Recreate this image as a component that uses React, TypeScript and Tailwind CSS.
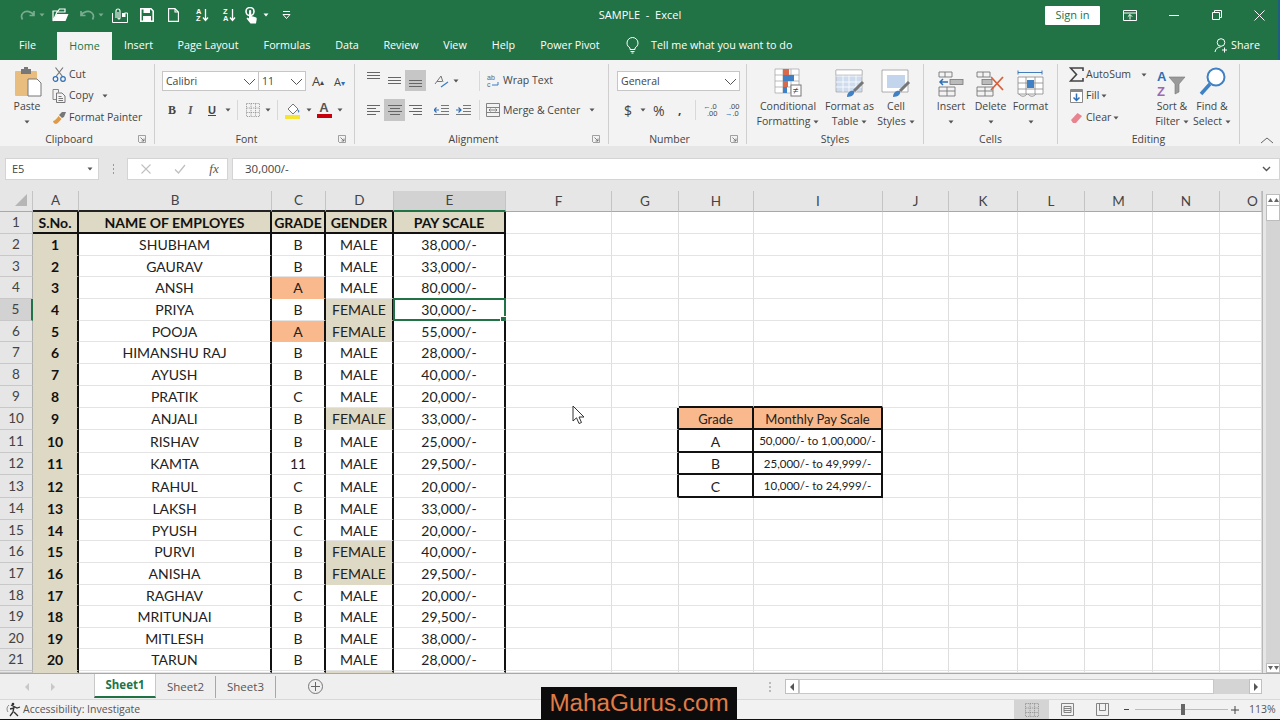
import React from "react";

const Caret = ({ c = "#555" }: { c?: string }) => (
  <svg width="6" height="4" viewBox="0 0 6 4" className="shrink-0"><path d="M0.5 0.5h5L3 3.5z" fill={c} /></svg>
);
const Chevron = () => (
  <svg width="13" height="8" viewBox="0 0 13 8" className="shrink-0"><path d="M1 1l5.5 5.5L12 1" fill="none" stroke="#555" strokeWidth="1" /></svg>
);
const Launcher = () => (
  <svg width="8" height="8" viewBox="0 0 8 8" className="shrink-0"><path d="M0.5 7V0.5H7.5V7.5H1" fill="none" stroke="#8a8a8a" strokeWidth="0.8" /><path d="M2.5 2.5L6 6M6 3.5V6H3.5" fill="none" stroke="#666" strokeWidth="0.8" /></svg>
);

/* ---------- QAT ---------- */
const W = "#ffffff";
const Qat = () => (
  <div className="flex items-center h-[30px] pl-[20px]">
    <span className="flex w-[32px] items-center gap-[3px] opacity-40">
      <svg width="16" height="14" viewBox="0 0 16 14"><path d="M14 3v4.5H9.5M14 7.5C12 3.5 6 2 3 5c-2 2-1.6 4.6-.5 6.5" fill="none" stroke={W} strokeWidth="1.7" /></svg>
      <Caret c={W} />
    </span>
    <span className="flex w-[27px]">
      <svg width="17" height="14" viewBox="0 0 17 14"><path d="M1 13V3h5l1.5-2H13v3H5L1 13z" fill="none" stroke={W} strokeWidth="1.2" /><path d="M1 13l3.5-7H16.5l-3 7z" fill={W} /></svg>
    </span>
    <span className="flex w-[33px] items-center gap-[3px] opacity-40">
      <svg width="16" height="14" viewBox="0 0 16 14"><path d="M2 3v4.5h4.5M2 7.5C4 3.5 10 2 13 5c2 2 1.6 4.6.5 6.5" fill="none" stroke={W} strokeWidth="1.7" /></svg>
      <Caret c={W} />
    </span>
    <span className="flex w-[28px]">
      <svg width="16" height="15" viewBox="0 0 16 15"><path d="M0.5 5v9.5h15V5h-3" fill="none" stroke={W} strokeWidth="1" /><path d="M4 10V3a2 2 0 014 0v7a1 1 0 01-2 0V4" fill="none" stroke={W} strokeWidth="1.1" /><rect x="10" y="5" width="3.5" height="4" fill={W} /></svg>
    </span>
    <span className="flex w-[28px]">
      <svg width="14" height="14" viewBox="0 0 14 14"><path d="M0.8 0.8H11L13.2 3V13.2H0.8z" fill="none" stroke={W} strokeWidth="1.6" /><rect x="3.5" y="1" width="6.5" height="4" fill={W} /><rect x="3" y="8" width="8" height="5" fill={W} /></svg>
    </span>
    <span className="flex w-[28px]">
      <svg width="11" height="14" viewBox="0 0 11 14"><path d="M0.6 0.6H7L10.4 4V13.4H0.6z M7 0.6V4H10.4" fill="none" stroke={W} strokeWidth="1.1" /></svg>
    </span>
    <span className="flex w-[27px] items-center">
      <span className="flex flex-col text-[7.5px] leading-[7px] font-bold text-white font-['Liberation_Sans',sans-serif] mr-[1px]"><span>A</span><span>Z</span></span>
      <svg width="7" height="14" viewBox="0 0 7 14"><path d="M3.5 1v11M1 9.5l2.5 3 2.5-3" fill="none" stroke={W} strokeWidth="1.3" /></svg>
    </span>
    <span className="flex w-[21px] items-center">
      <span className="flex flex-col text-[7.5px] leading-[7px] font-bold text-white font-['Liberation_Sans',sans-serif] mr-[1px]"><span>Z</span><span>A</span></span>
      <svg width="7" height="14" viewBox="0 0 7 14"><path d="M3.5 1v11M1 9.5l2.5 3 2.5-3" fill="none" stroke={W} strokeWidth="1.3" /></svg>
    </span>
    <span className="flex w-[37px] items-center gap-[5px]">
      <svg width="14" height="17" viewBox="0 0 14 17"><circle cx="6" cy="4.5" r="4" fill="none" stroke={W} strokeWidth="1.6" /><path d="M5 4a1.1 1.1 0 012.2 0v5l4.3 1.2c1 .3 1.3 1 1.2 2L12 16.5H6.5L2.5 11.5l1-1L5 11.5z" fill={W} /></svg>
      <Caret c={W} />
    </span>
    <span className="flex ml-[1px]">
      <svg width="9" height="8" viewBox="0 0 9 8"><path d="M1 .5h7" stroke={W} strokeWidth="1" /><path d="M1 3.5h7L4.5 7.5z" fill="none" stroke={W} strokeWidth="1" /></svg>
    </span>
  </div>
);

const TitleBar = () => (
  <div className="grid grid-cols-[1fr_auto_1fr] h-[30px] bg-[#217346] border-r-2 border-r-[#1d5f84] text-white">
    <Qat />
    <div className="flex items-center text-[11px] whitespace-pre pl-[2px]">SAMPLE  -  Excel</div>
    <div className="flex items-center justify-end">
      <div className="flex items-center justify-center w-[55px] h-[19px] bg-white text-[#217346] text-[11px] rounded-[1px]">Sign in</div>
      <div className="flex justify-center w-[60px]">
        <svg width="14" height="11" viewBox="0 0 14 11"><path d="M.5.5h13v10H.5zM.5 3h13" fill="none" stroke={W} strokeWidth="1" /><path d="M7 9.5V4.5M4.8 6.7L7 4.5l2.2 2.2" fill="none" stroke={W} strokeWidth="1" /></svg>
      </div>
      <div className="flex justify-center w-[28px]"><div className="w-[10px] h-[1px] bg-white" /></div>
      <div className="flex justify-center w-[58px]">
        <svg width="10" height="10" viewBox="0 0 10 10"><path d="M.5 2.5h7v7h-7zM2.5 2.5v-2h7v7h-2" fill="none" stroke={W} strokeWidth="1" /></svg>
      </div>
      <div className="flex justify-center w-[27px] mr-[5px]">
        <svg width="11" height="11" viewBox="0 0 11 11"><path d="M.5.5l10 10M10.5.5l-10 10" stroke={W} strokeWidth="1" /></svg>
      </div>
    </div>
  </div>
);

const Tab = ({ w, children }: { w: string; children: React.ReactNode }) => (
  <div className={`flex items-center justify-center h-full ${w}`}>{children}</div>
);

const TabsBar = () => (
  <div className="flex items-stretch h-[30px] bg-[#217346] border-r-2 border-r-[#1d5f84] text-white text-[10.750px]">
    <Tab w="w-[57px] pr-[2px]">File</Tab>
    <div className="flex items-center justify-center w-[55px] bg-[#f3f3f3] text-[#217346] mt-[2px]">Home</div>
    <Tab w="w-[53px]">Insert</Tab>
    <Tab w="w-[86px]">Page Layout</Tab>
    <Tab w="w-[72px]">Formulas</Tab>
    <Tab w="w-[48px]">Data</Tab>
    <Tab w="w-[60px]">Review</Tab>
    <Tab w="w-[48px]">View</Tab>
    <Tab w="w-[49px]">Help</Tab>
    <Tab w="w-[84px]">Power Pivot</Tab>
    <div className="flex items-center ml-[14px] gap-[12px]">
      <svg width="13" height="17" viewBox="0 0 13 17"><path d="M4 12.5V11C2.5 10 1 8.5 1 6a5.5 5.5 0 0111 0c0 2.5-1.5 4-3 5v1.5zM4.5 14.5h4M5.500 16h2" fill="none" stroke={W} strokeWidth="1" /></svg>
      <span>Tell me what you want to do</span>
    </div>
    <div className="flex items-center ml-auto mr-[18px] gap-[3px]">
      <svg width="14" height="15" viewBox="0 0 14 15"><circle cx="7" cy="4.500" r="3.800" fill="none" stroke={W} strokeWidth="1" /><path d="M1 14c.5-3 2.500-5 5.500-5M10.500 9.500v5M8 12h5" fill="none" stroke={W} strokeWidth="1" /></svg>
      <span>Share</span>
    </div>
  </div>
);

/* ---------- Ribbon ---------- */
const Group = ({ w, label, launcher, children }: { w: string; label: string; launcher?: boolean; children: React.ReactNode }) => (
  <div className={`flex flex-col shrink-0 h-[80px] mt-[4px] border-r border-r-[#cfcfcf] ${w}`}>
    <div className="flex h-[68px] shrink-0">{children}</div>
    <div className="flex items-center h-[16px] shrink-0 text-[10.500px] text-[#444]">
      <span className="flex-1 text-center">{label}</span>
      {launcher && <span className="flex w-[16px] mb-[2px]"><Launcher /></span>}
    </div>
  </div>
);

const SmallRow = ({ icon, text, caret }: { icon: React.ReactNode; text: string; caret?: string }) => (
  <div className="flex items-center h-[21.5px]">
    <span className="flex justify-center w-[18px]">{icon}</span>
    <span className="ml-[1px]">{text}</span>
    {caret && <span className={`flex ${caret}`}><Caret /></span>}
  </div>
);

const Big = ({ w, icon, l1, l2, caretLine2 = false }: { w: string; icon: React.ReactNode; l1: string; l2?: string; caretLine2?: boolean }) => (
  <div className={`flex flex-col items-center shrink-0 ${w}`}>
    <div className="flex items-end justify-center h-[34px]">{icon}</div>
    <div className="h-[15px] leading-[15px] mt-[1px] whitespace-nowrap">{l1}</div>
    <div className="flex items-center gap-[3px] h-[15px] whitespace-nowrap">
      {l2 && <span>{l2}</span>}
      {caretLine2 && <Caret />}
    </div>
  </div>
);

const Lines = ({ ys, a }: { ys: number; a: "l" | "c" | "r" | "t" | "m" | "b" }) => {
  const d =
    a === "l" ? "M0 1.500h13M0 4.500h9M0 7.500h13M0 10.500h9" :
    a === "c" ? "M0 1.500h14M2 4.500h10M0 7.500h14M2 10.500h10" :
    a === "r" ? "M0 1.500h13M4 4.500h9M0 7.500h13M4 10.500h9" :
    a === "t" ? "M0 1.500h13M0 4.500h13M0 7.500h13" :
    a === "m" ? "M0 3.500h13M0 6.500h13M0 9.500h13" : "M0 4.500h13M0 7.500h13M0 10.500h13";
  return <svg width="14" height={ys} viewBox="0 0 14 12"><path d={d} stroke="#666" strokeWidth="1" fill="none" /></svg>;
};

const Vsep = ({ ml, mr }: { ml: string; mr: string }) => <div className={`w-[1px] h-[20px] bg-[#d8d8d8] ${ml} ${mr}`} />;

const GridIco = ({ cls = "" }: { cls?: string }) => (
  <svg width="14" height="14" viewBox="0 0 14 14" className={cls}><path d="M.5.500h13v13H.5zM.5 5h13M.5 9.500h13M5 .500v13M9.500 .500v13" fill="none" stroke="#888" strokeWidth="0.8" strokeDasharray="1.200 1" /></svg>
);

const Ribbon = () => (
  <div className="flex h-[86px] bg-[#f3f3f3] text-[10.500px] text-[#444]">
    {/* Clipboard */}
    <Group w="w-[155px]" label="Clipboard" launcher>
      <div className="flex flex-col items-center w-[50px] pl-[5px] pt-[3px] shrink-0">
        <svg width="28" height="30" viewBox="0 0 28 30"><rect x="1" y="4" width="22" height="25" rx="1" fill="#e9bd7d" /><rect x="7" y="2" width="10" height="5" fill="#777" /><rect x="10" y="0" width="4" height="3" fill="#777" /><path d="M14 12h9l4 4v13H14z" fill="#fff" stroke="#777" strokeWidth="1" /></svg>
        <div className="h-[15px] leading-[15px] mt-[2px] ml-[-1px]">Paste</div>
        <div className="flex items-center h-[15px] ml-[-1px]"><Caret /></div>
      </div>
      <div className="flex flex-col">
        <SmallRow text="Cut" icon={
          <svg width="15" height="15" viewBox="0 0 15 15"><path d="M4 9.500L11 .5M10.500 9.500L3.500 .5" stroke="#777" strokeWidth="1.200" fill="none" /><circle cx="3.500" cy="12" r="2.300" fill="none" stroke="#2f6fb5" strokeWidth="1.200" /><circle cx="11" cy="12" r="2.300" fill="none" stroke="#2f6fb5" strokeWidth="1.200" /></svg>
        } />
        <SmallRow text="Copy" caret="ml-[8px]" icon={
          <svg width="14" height="14" viewBox="0 0 14 14"><path d="M1 .5h5.500v3M1 .5v10h3" fill="none" stroke="#888" strokeWidth="1" /><path d="M4.500 4H10l3 3v6.500H4.500zM6.500 7.500h3M6.500 9.500h4.500M6.500 11.500h4.500" fill="none" stroke="#777" strokeWidth="1" /></svg>
        } />
        <SmallRow text="Format Painter" icon={
          <svg width="15" height="14" viewBox="0 0 15 14"><path d="M7 4l3-3 4 0-2 5-2 1z" fill="#777" /><path d="M1 10c2 0 4-3 5.500-5L9.500 8c-2 2-4 5-5.500 5-1 0-3-1-3-3z" fill="#e09a45" /></svg>
        } />
      </div>
    </Group>

    {/* Font */}
    <Group w="w-[200px]" label="Font" launcher>
      <div className="flex flex-col pt-[7px] pl-[7px]">
        <div className="flex items-center h-[20px]">
          <div className="flex items-center justify-between w-[97px] h-[20px] bg-white border border-[#c6c6c6] pl-[3px] pr-[2px] pt-[1px]">Calibri<Chevron /></div>
          <div className="flex items-center justify-between w-[47px] h-[20px] bg-white border border-[#c6c6c6] border-l-0 pl-[3px] pr-[2px] pt-[1px]">11<Chevron /></div>
          <div className="flex items-center justify-center w-[22px] ml-[1px] text-[13px] leading-none">A<span className="text-[8px] self-start mt-[3px]">▴</span></div>
          <div className="flex items-center justify-center w-[21px] text-[11px] leading-none">A<span className="text-[8px] self-start mt-[3px] text-[#2f6fb5]">▾</span></div>
        </div>
        <div className="flex items-center h-[20px] mt-[9px] pl-[6px]">
          <span className="w-[20px] font-bold font-['Liberation_Serif',serif] text-[12px] text-[#444]">B</span>
          <span className="w-[20px] italic font-bold font-['Liberation_Serif',serif] text-[12px] text-[#555]">I</span>
          <span className="w-[17px] underline font-bold font-['Liberation_Sans',sans-serif] text-[11px] text-[#444]">U</span>
          <Caret />
          <Vsep ml="ml-[6px]" mr="mr-[8px]" />
          <GridIco />
          <span className="flex ml-[5px]"><Caret /></span>
          <Vsep ml="ml-[6px]" mr="mr-[7px]" />
          <svg width="16" height="17" viewBox="0 0 16 17"><path d="M3 7l5-5 5 5-5 5z" fill="#fff" stroke="#777" strokeWidth="1" /><path d="M12 6.500l2.500 2.500-1 2z" fill="#3a7bc8" /><rect x="0" y="13" width="15" height="4" fill="#f4e532" /></svg>
          <span className="flex ml-[5px]"><Caret /></span>
          <span className="flex flex-col items-center ml-[4px] w-[16px] leading-[12px] text-[13px] font-bold font-['Liberation_Sans',sans-serif] text-[#555]">A<span className="block w-[15px] h-[4px] bg-[#c8000b]" /></span>
          <span className="flex ml-[5px]"><Caret /></span>
        </div>
      </div>
    </Group>

    {/* Alignment */}
    <Group w="w-[254px]" label="Alignment" launcher>
      <div className="flex flex-col pt-[6px] pl-[8px]">
        <div className="flex items-center h-[21px]">
          <span className="flex justify-center w-[21px] mt-[-8px]"><Lines ys={12} a="t" /></span>
          <span className="flex justify-center w-[21px] mt-[-2px]"><Lines ys={12} a="m" /></span>
          <span className="flex justify-center items-end w-[21px] h-[21px] bg-[#c6c6c6] pb-[3px]"><Lines ys={12} a="b" /></span>
          <span className="flex items-center ml-[8px] gap-[4px] w-[44px]">
            <svg width="15" height="14" viewBox="0 0 15 14"><path d="M1 10L7 2l2 6M3 7.500h5" fill="none" stroke="#777" strokeWidth="1" /><path d="M7 13l7-5" stroke="#3a7bc8" strokeWidth="1.200" /></svg>
            <Caret />
          </span>
          <Vsep ml="ml-[1px]" mr="mr-[6px]" />
          <svg width="14" height="14" viewBox="0 0 14 14"><text x="1" y="6" fontSize="7" fill="#666" fontFamily="Liberation Sans">ab</text><text x="1" y="13" fontSize="7" fill="#666" fontFamily="Liberation Sans">c</text><path d="M6 11h6M12 8v3" stroke="#3a7bc8" strokeWidth="1" fill="none" /></svg>
          <span className="ml-[3px] mt-[1px]">Wrap Text</span>
        </div>
        <div className="flex items-center h-[22px] mt-[8px]">
          <span className="flex justify-center w-[21px]"><Lines ys={12} a="l" /></span>
          <span className="flex justify-center items-center w-[21px] h-[22px] bg-[#c6c6c6]"><Lines ys={12} a="c" /></span>
          <span className="flex justify-center w-[21px]"><Lines ys={12} a="r" /></span>
          <span className="flex items-center ml-[8px] gap-[7px] w-[44px]">
            <svg width="15" height="12" viewBox="0 0 15 12"><path d="M7 1.500h8M7 4.500h8M7 7.500h8M0 10.500h15" stroke="#777" strokeWidth="1" /><path d="M5 6H0M2.500 3.500L0 6l2.500 2.500" stroke="#2f6fb5" strokeWidth="1.200" fill="none" /></svg>
            <svg width="15" height="12" viewBox="0 0 15 12"><path d="M7 1.500h8M7 4.500h8M7 7.500h8M0 10.500h15" stroke="#777" strokeWidth="1" /><path d="M0 6h5M2.500 3.500L5 6 2.500 8.500" stroke="#2f6fb5" strokeWidth="1.200" fill="none" /></svg>
          </span>
          <Vsep ml="ml-[1px]" mr="mr-[6px]" />
          <svg width="14" height="14" viewBox="0 0 14 14"><path d="M.5.500h13v13H.5zM.5 4.500h13M.5 9.500h13M3 7h8M3 7l1.500-1.500M3 7l1.500 1.500M11 7L9.500 5.500M11 7L9.500 8.500" fill="none" stroke="#777" strokeWidth="0.9" /></svg>
          <span className="ml-[3px] mr-[9px] mt-[1px]">Merge &amp; Center</span>
          <Caret />
        </div>
      </div>
    </Group>

    {/* Number */}
    <Group w="w-[138px]" label="Number" launcher>
      <div className="flex flex-col pt-[7px] pl-[8px]">
        <div className="flex items-center justify-between w-[123px] h-[20px] bg-white border border-[#c6c6c6] pl-[3px] pr-[2px] pt-[1px]">General<Chevron /></div>
        <div className="flex items-center h-[20px] mt-[9px] pl-[7px]">
          <span className="w-[16px] text-[14px]">$</span>
          <Caret />
          <span className="ml-[7px] w-[22px] text-[14px]">%</span>
          <span className="w-[20px] font-bold text-[12px] pl-[3px]">,</span>
          <Vsep ml="ml-[0px]" mr="mr-[7px]" />
          <span className="flex flex-col w-[22px] text-[7.500px] leading-[7.500px] font-['Liberation_Sans',sans-serif]"><span><span className="text-[#2f6fb5]">←</span>.0</span><span className="pl-[4px]">.00</span></span>
          <span className="flex flex-col w-[16px] text-[7.500px] leading-[7.500px] font-['Liberation_Sans',sans-serif]"><span className="pl-[4px]">.00</span><span><span className="text-[#2f6fb5]">→</span>.0</span></span>
        </div>
      </div>
    </Group>

    {/* Styles */}
    <Group w="w-[177px]" label="Styles">
      <Big w="w-[82px]" l1="Conditional" l2="Formatting" caretLine2 icon={
        <svg width="28" height="30" viewBox="0 0 28 30"><path d="M1 1h24v24H1zM1 7h24M1 13h24M1 19h24M9 1v24M17 1v24" fill="#fff" stroke="#aaa" strokeWidth="0.8" /><rect x="9" y="1" width="6" height="6" fill="#d8694a" /><rect x="9" y="7" width="11" height="6" fill="#3f81c4" /><rect x="9" y="13" width="5" height="6" fill="#d8694a" /><rect x="9" y="19" width="4" height="6" fill="#3f81c4" /><rect x="17" y="17" width="10" height="11" fill="#fff" stroke="#777" /><text x="19" y="26" fontSize="10" fill="#444" fontFamily="Liberation Sans">≠</text></svg>
      } />
      <Big w="w-[41px]" l1="Format as" l2="Table" caretLine2 icon={
        <svg width="30" height="30" viewBox="0 0 30 30"><path d="M1 2h26v22H1z" fill="#cfdcee" stroke="#aaa" strokeWidth="0.8" /><path d="M1 8h26M1 14h26M1 19h26M8 2v22M14 2v22M21 2v22" stroke="#fff" strokeWidth="0.8" /><path d="M1 2h26v5H1z" fill="#fff" stroke="#aaa" strokeWidth="0.6" /><path d="M28 14l-9 9" stroke="#777" strokeWidth="3" /><path d="M12 29c0-4 3-7 7-6 1 3-2 6-7 6z" fill="#3f81c4" /></svg>
      } />
      <Big w="w-[52px]" l1="Cell" l2="Styles" caretLine2 icon={
        <svg width="30" height="30" viewBox="0 0 30 30"><path d="M1 2h26v22H1z" fill="#fff" stroke="#999" strokeWidth="0.8" /><rect x="6" y="7" width="18" height="13" fill="#c3d5ec" /><path d="M28 14l-9 9" stroke="#777" strokeWidth="3" /><path d="M12 29c0-4 3-7 7-6 1 3-2 6-7 6z" fill="#3f81c4" /></svg>
      } />
    </Group>

    {/* Cells */}
    <Group w="w-[134px]" label="Cells">
      <div className="w-[7px]" />
      <Big w="w-[40px]" l1="Insert" caretLine2 icon={
        <svg width="27" height="27" viewBox="0 0 27 27"><path d="M1 1h13v5H1zM7 1v5M1 16h16v9H1zM1 20h16M9 16v9" fill="none" stroke="#777" strokeWidth="0.9" /><rect x="12" y="8.500" width="13" height="5" fill="#bbb" stroke="#777" strokeWidth="0.8" /><path d="M10 11H2M5 8l-3 3 3 3" fill="none" stroke="#2f6fb5" strokeWidth="1.500" /></svg>
      } />
      <Big w="w-[39px]" l1="Delete" caretLine2 icon={
        <svg width="29" height="27" viewBox="0 0 29 27"><path d="M1 1h13v5H1zM7 1v5M1 16h16v9H1zM1 20h16M9 16v9" fill="none" stroke="#777" strokeWidth="0.9" /><rect x="6" y="8.500" width="10" height="5" fill="#bbb" stroke="#777" strokeWidth="0.8" /><path d="M15 6l12 13M27 6L15 19" stroke="#d8603c" strokeWidth="1.800" /></svg>
      } />
      <Big w="w-[41px]" l1="Format" caretLine2 icon={
        <svg width="27" height="28" viewBox="0 0 27 28"><path d="M1 2.500h24M1 .5v4M25 .5v4" stroke="#2f6fb5" strokeWidth="0.9" fill="none" /><path d="M1 7h25v17H1zM1 13h25M1 19h25M9 7v17M18 7v17" fill="#fff" stroke="#888" strokeWidth="0.8" /><rect x="10" y="10" width="7" height="8" fill="#3f81c4" /><path d="M2 24c2 3 6 3 8 0M11 24c2 3 6 3 8 0" fill="none" stroke="#888" strokeWidth="0.8" /></svg>
      } />
    </Group>

    {/* Editing */}
    <Group w="w-[182px]" label="Editing">
      <div className="flex flex-col w-[94px] pl-[9px] shrink-0">
        <SmallRow text="AutoSum" caret="ml-[10px]" icon={
          <svg width="15" height="15" viewBox="0 0 15 15"><path d="M14 4V1H1.500l6 6.500-6 6.500H14v-3" fill="none" stroke="#444" strokeWidth="1.600" /></svg>
        } />
        <SmallRow text="Fill" caret="ml-[2px]" icon={
          <svg width="13" height="14" viewBox="0 0 13 14"><path d="M.5.500h12v13H.5z" fill="#fff" stroke="#888" strokeWidth="1" /><rect x="1" y="1" width="11" height="2" fill="#888" /><path d="M6.500 4.500v7M3.500 8.500l3 3 3-3" fill="none" stroke="#2f6fb5" strokeWidth="1.500" /></svg>
        } />
        <SmallRow text="Clear" caret="ml-[2px]" icon={
          <svg width="13" height="12" viewBox="0 0 13 12"><path d="M1 8l6.500-7L12 4l-6 7H3z" fill="#e8838f" /></svg>
        } />
      </div>
      <Big w="w-[40px]" l1="Sort &" l2="Filter" caretLine2 icon={
        <svg width="30" height="30" viewBox="0 0 30 30"><text x="0" y="13" fontSize="13" fontWeight="bold" fill="#2f6fb5" fontFamily="Liberation Sans">A</text><text x="0" y="28" fontSize="13" fontWeight="bold" fill="#9a68b5" fontFamily="Liberation Sans">Z</text><path d="M12 9h16l-6 7v8l-4 2V16z" fill="#9a9a9a" stroke="#777" strokeWidth="0.6" /></svg>
      } />
      <Big w="w-[40px]" l1="Find &" l2="Select" caretLine2 icon={
        <svg width="27" height="31" viewBox="0 0 27 31"><circle cx="17" cy="10" r="8.500" fill="#fff" stroke="#3f81c4" strokeWidth="2" /><path d="M11 17L2 27" stroke="#3f81c4" strokeWidth="3.500" /></svg>
      } />
    </Group>

    <div className="flex flex-1 items-end justify-end pr-[3px] pb-[2px]">
      <svg width="14" height="7" viewBox="0 0 14 7" className="mr-[3px]"><path d="M1 6l6-5 6 5" fill="none" stroke="#666" strokeWidth="1" /></svg>
    </div>
  </div>
);

const FormulaBar = () => (
  <div className="flex h-[45px] pt-[12px] bg-[#e6e6e6] text-[11px] text-[#444]">
    <div className="flex items-center justify-between w-[94px] h-[22px] ml-[5px] bg-white border border-[#d4d4d4] pl-[6px] pr-[5px]">E5<Caret /></div>
    <div className="flex flex-col items-center justify-center w-[28px] h-[22px] gap-[2px]">
      <span className="w-[1px] h-[2px] bg-[#999]" /><span className="w-[1px] h-[2px] bg-[#999]" /><span className="w-[1px] h-[2px] bg-[#999]" />
    </div>
    <div className="flex items-center w-[101px] h-[22px] bg-white border border-[#d4d4d4] shrink-0">
      <span className="flex justify-center w-[35px]">
        <svg width="10" height="10" viewBox="0 0 10 10"><path d="M.5.500l9 9M9.500 .500l-9 9" stroke="#c0c0c0" strokeWidth="1.100" /></svg>
      </span>
      <span className="flex justify-center w-[33px]">
        <svg width="12" height="10" viewBox="0 0 12 10"><path d="M1 5.500L4.500 9 11 1" fill="none" stroke="#c0c0c0" strokeWidth="1.300" /></svg>
      </span>
      <span className="w-[31px] pl-[5px] text-center italic font-['Liberation_Serif',serif] text-[13px] text-[#555]">fx</span>
    </div>
    <div className="flex items-center flex-1 h-[22px] ml-[4px] bg-white border border-[#d4d4d4] pl-[12px] pr-[6px] text-[11.500px] justify-between">
      <span>30,000/-</span>
      <svg width="9" height="6" viewBox="0 0 9 6" className="mr-[2px]"><path d="M1 1l3.500 3.500L8 1" fill="none" stroke="#555" strokeWidth="1.400" /></svg>
    </div>
  </div>
);

/* ---------- Sheet ---------- */
const COLS = ["A", "B", "C", "D", "E", "F", "G", "H", "I", "J", "K", "L", "M", "N", "O"];
type Row = [string, string, string, string];
const DATA: Row[] = [
  ["SHUBHAM", "B", "MALE", "38,000/-"],
  ["GAURAV", "B", "MALE", "33,000/-"],
  ["ANSH", "A", "MALE", "80,000/-"],
  ["PRIYA", "B", "FEMALE", "30,000/-"],
  ["POOJA", "A", "FEMALE", "55,000/-"],
  ["HIMANSHU RAJ", "B", "MALE", "28,000/-"],
  ["AYUSH", "B", "MALE", "40,000/-"],
  ["PRATIK", "C", "MALE", "20,000/-"],
  ["ANJALI", "B", "FEMALE", "33,000/-"],
  ["RISHAV", "B", "MALE", "25,000/-"],
  ["KAMTA", "11", "MALE", "29,500/-"],
  ["RAHUL", "C", "MALE", "20,000/-"],
  ["LAKSH", "B", "MALE", "33,000/-"],
  ["PYUSH", "C", "MALE", "20,000/-"],
  ["PURVI", "B", "FEMALE", "40,000/-"],
  ["ANISHA", "B", "FEMALE", "29,500/-"],
  ["RAGHAV", "C", "MALE", "20,000/-"],
  ["MRITUNJAI", "B", "MALE", "29,500/-"],
  ["MITLESH", "B", "MALE", "38,000/-"],
  ["TARUN", "B", "MALE", "28,000/-"],
];
const SIDE: Record<number, [string, string]> = {
  10: ["Grade", "Monthly Pay Scale"],
  11: ["A", "50,000/- to 1,00,000/-"],
  12: ["B", "25,000/- to 49,999/-"],
  13: ["C", "10,000/- to 24,999/-"],
};
const TAN = "bg-[#ddd9c4]";
const ORANGE = "bg-[#f9b98c]";
const THIN_R = "border-r border-r-[#dedede]";
const THIN_B = "border-b border-b-[#e4e4e4]";
const THICK_R = "border-r-2 border-r-[#111]";
const THICK_B = "border-b-2 border-b-[#111]";

function cellInfo(r: number, c: number) {
  let text = "";
  let bg = "bg-white";
  let extra = "text-[14px] text-[#222]";
  let right = THIN_R;
  let bottom = THIN_B;
  const inMain = c <= 4;
  if (inMain) {
    right = THICK_R;
    if (r === 1) {
      bg = TAN;
      extra = "text-[14px] font-bold text-[#111]";
      bottom = THICK_B;
      text = ["S.No.", "NAME OF EMPLOYES", "GRADE", "GENDER", "PAY SCALE"][c];
    } else if (r <= 21) {
      const row = DATA[r - 2];
      if (c === 0) {
        bg = TAN;
        extra = "text-[14px] font-bold text-[#111]";
        text = String(r - 1);
      } else {
        text = row[c - 1];
      }
      if (c === 2 && text === "A") bg = ORANGE;
      if (c === 3 && text === "FEMALE") bg = TAN;
    } else if (c === 0 || c === 3) {
      bg = TAN;
    }
    if (bg !== "bg-white" && r > 1) bottom = "border-b border-b-transparent";
  }
  if (r === 9 && (c === 7 || c === 8)) bottom = THICK_B;
  if (r >= 10 && r <= 13) {
    if (c === 6) right = THICK_R;
    if (c === 7 || c === 8) {
      right = THICK_R;
      bottom = THICK_B;
      const v = SIDE[r][c - 7];
      text = v;
      if (r === 10) {
        bg = ORANGE;
        extra = "pt-[3px] text-[13px] text-[#222]";
      } else {
        extra = c === 7 ? "pt-[1px] text-[14px] text-[#222]" : "pt-[1px] text-[11.500px] text-[#222]";
      }
    }
  }
  return { text, bg, extra, right, bottom };
}

const Sheet = () => {
  const rows = Array.from({ length: 22 }, (_, i) => i + 1);
  return (
    <div className="flex h-[482px] bg-[#e6e6e6]">
      <div className="grid w-[1262px] shrink-0 overflow-hidden grid-cols-[33px_46px_193px_54px_68px_112px_106px_67px_75px_129px_66px_69px_67px_68px_67px_42px] grid-rows-[21px_22px_22px_21px_22px_22px_21px_22px_22px_22px_22px_23px_22px_23px_22px_21px_22px_22px_21px_22px_21px_22px_2px] font-['Lato',sans-serif]">
        <div className="flex items-end justify-end pr-[5px] pb-[5px] border-r border-r-[#c4c4c4] border-b border-b-[#a8a8a8] bg-[#e6e6e6]">
          <svg width="12" height="12" viewBox="0 0 12 12"><path d="M12 0v12H0z" fill="#b6b6b6" /></svg>
        </div>
        {COLS.map((c, i) => (
          <div
            key={c}
            className={`flex items-center justify-center text-[13.500px] text-[#444] border-r border-r-[#c4c4c4] ${
              i === 4 ? "bg-[#d2d2d2] border-b-2 border-b-[#217346]" : i < 4 ? "bg-[#e6e6e6] border-b-2 border-b-[#222]" : "bg-[#e6e6e6] border-b border-b-[#a8a8a8]"
            } ${i === 14 ? "pl-[24px] overflow-hidden" : ""}`}
          >
            {c}
          </div>
        ))}
        {rows.map((r) => (
          <React.Fragment key={r}>
            <div
              className={`flex items-center justify-center text-[13.500px] text-[#444] border-b border-b-[#c8c8c8] overflow-hidden ${
                r === 5 ? "bg-[#d2d2d2] border-r-2 border-r-[#217346]" : "bg-[#e6e6e6] border-r border-r-[#b0b0b0]"
              }`}
            >
              {r <= 21 ? r : ""}
            </div>
            {COLS.map((_, c) => {
              const info = cellInfo(r, c);
              const selected = r === 5 && c === 4;
              return (
                <div
                  key={c}
                  className={`relative flex items-center justify-center whitespace-nowrap overflow-visible ${info.bg} ${info.extra} ${info.right} ${info.bottom}`}
                >
                  {info.text}
                  {selected && (
                    <>
                      <span className="absolute left-[-1px] top-[-1px] right-[-2px] bottom-[-1px] border-2 border-[#217346]" />
                      <span className="absolute right-[-3px] bottom-[-3px] w-[5px] h-[5px] bg-[#217346] border border-white box-content" />
                    </>
                  )}
                </div>
              );
            })}
          </React.Fragment>
        ))}
      </div>
      <div className="flex flex-col flex-1 pl-[3px] pt-[3px] border-l border-l-[#b8b8b8]">
        <div className="flex items-center justify-center h-[12px] bg-white border border-[#bdbdbd]">
          <svg width="11" height="4" viewBox="0 0 11 4"><path d="M0 4l2.500-4L5 4zM6 4l2.500-4L11 4z" fill="#666" /></svg>
        </div>
        <div className="h-[15px] bg-white border border-[#bdbdbd] border-t-0" />
        <div className="flex-1 bg-[#d4d4d4]" />
        <div className="flex items-center justify-center h-[10px] bg-white border border-[#bdbdbd]">
          <svg width="11" height="4" viewBox="0 0 11 4"><path d="M0 0l2.500 4L5 0zM6 0l2.500 4L11 0z" fill="#666" /></svg>
        </div>
      </div>
    </div>
  );
};

const SheetTabs = () => (
  <div className="flex items-center h-[26px] bg-[#efefef] border-t border-t-[#a8a8a8] text-[11.500px] text-[#555]">
    <div className="flex items-center w-[94px] pl-[25px] gap-[22px] text-[#ccc]">
      <svg width="4" height="8" viewBox="0 0 4 8"><path d="M4 0v8L0 4z" fill="#c8c8c8" /></svg>
      <svg width="4" height="8" viewBox="0 0 4 8"><path d="M0 0v8l4-4z" fill="#c8c8c8" /></svg>
    </div>
    <div className="flex items-center justify-center w-[62px] h-[24px] mt-[-2px] bg-white text-[#217346] font-bold border-b-2 border-b-[#217346] border-l border-l-[#c8c8c8] border-r border-r-[#c8c8c8]">Sheet1</div>
    <div className="flex items-center justify-center w-[60px] h-[22px] border-r border-r-[#a8a8a8]">Sheet2</div>
    <div className="flex items-center justify-center w-[60px] h-[22px] border-r border-r-[#a8a8a8]">Sheet3</div>
    <div className="flex items-center justify-center w-[15px] h-[15px] ml-[32px] rounded-full border border-[#777] text-[#555]">
      <svg width="9" height="9" viewBox="0 0 9 9"><path d="M4.500 0v9M0 4.500h9" stroke="#666" strokeWidth="1" /></svg>
    </div>
    <div className="flex flex-col gap-[2px] ml-[446px] w-[2px] items-center">
      <span className="w-[2px] h-[2px] bg-[#bbb]" /><span className="w-[2px] h-[2px] bg-[#bbb]" /><span className="w-[2px] h-[2px] bg-[#bbb]" />
    </div>
    <div className="flex items-center h-[15px] ml-[14px]">
      <div className="flex items-center justify-center w-[14px] h-[15px] bg-white border border-[#c0c0c0]">
        <svg width="4" height="8" viewBox="0 0 4 8"><path d="M4 0v8L0 4z" fill="#555" /></svg>
      </div>
      <div className="w-[415px] h-[15px] bg-white border border-[#c8c8c8]" />
      <div className="w-[35px] h-[15px] bg-[#d4d4d4]" />
      <div className="flex items-center justify-center w-[13px] h-[15px] bg-white border border-[#c0c0c0]">
        <svg width="4" height="8" viewBox="0 0 4 8"><path d="M0 0v8l4-4z" fill="#555" /></svg>
      </div>
    </div>
  </div>
);

const StatusBar = () => (
  <div className="flex items-center h-[20px] bg-[#f2f2f2] border-t border-t-[#d8d8d8] text-[10.500px] text-[#555]">
    <span className="flex ml-[6px] mr-[2px]">
      <svg width="15" height="15" viewBox="0 0 15 15"><path d="M2 10a5 5 0 011-7" fill="none" stroke="#888" strokeWidth="1" /><path d="M5 3l6 3 3-1M8 5l-1 5-3 4M8 10l4 4M4 7l4-1" fill="none" stroke="#333" strokeWidth="1.300" /><circle cx="7" cy="2" r="1.300" fill="#333" /></svg>
    </span>
    <span>Accessibility: Investigate</span>
    <div className="flex items-center ml-auto h-full">
      <div className="flex items-center justify-center w-[35px] h-full bg-[#d4d4d4]"><GridIco /></div>
      <div className="flex justify-center w-[37px]">
        <svg width="13" height="13" viewBox="0 0 13 13"><path d="M.5.500h12v12H.5zM3 3.500h7v6H3zM3 5.500h7M3 7.500h7" fill="none" stroke="#777" strokeWidth="0.9" /></svg>
      </div>
      <div className="flex justify-center w-[33px]">
        <svg width="13" height="13" viewBox="0 0 13 13"><path d="M.5.500h12v12H.5zM3.500 .500v7h6v-7" fill="none" stroke="#777" strokeWidth="0.9" /></svg>
      </div>
      <div className="w-[5px] h-[1px] bg-[#444] ml-[5px]" />
      <div className="relative w-[93px] h-[1px] bg-[#bcbcbc] ml-[6px]">
        <span className="absolute left-[46px] top-[-5px] w-[4px] h-[11px] bg-[#666]" />
      </div>
      <svg width="8" height="8" viewBox="0 0 8 8" className="ml-[3px]"><path d="M4 0v8M0 4h8" stroke="#444" strokeWidth="1" /></svg>
      <span className="ml-[10px] w-[31px] whitespace-nowrap text-[10.500px]">113%</span>
    </div>
  </div>
);

export default function App() {
  return (
    <div className="relative flex flex-col w-[1280px] h-[720px] overflow-hidden bg-[#111] font-['Open_Sans',sans-serif]">
      <TitleBar />
      <TabsBar />
      <Ribbon />
      <FormulaBar />
      <Sheet />
      <SheetTabs />
      <StatusBar />
      <svg width="14" height="20" viewBox="0 0 14 20" className="absolute left-[572px] top-[405px]">
        <path d="M1 1v15l3.500-3.200L7 18.500l2.500-1-2.500-5.500h5z" fill="#fff" stroke="#333" strokeWidth="1" />
      </svg>
      <div className="absolute left-[541px] top-[687px] flex items-center justify-center w-[196px] h-[33px] bg-[#0c0c0c] text-[#e07b45] text-[24.250px] font-['Liberation_Sans',sans-serif]">MahaGurus.com</div>
    </div>
  );
}
